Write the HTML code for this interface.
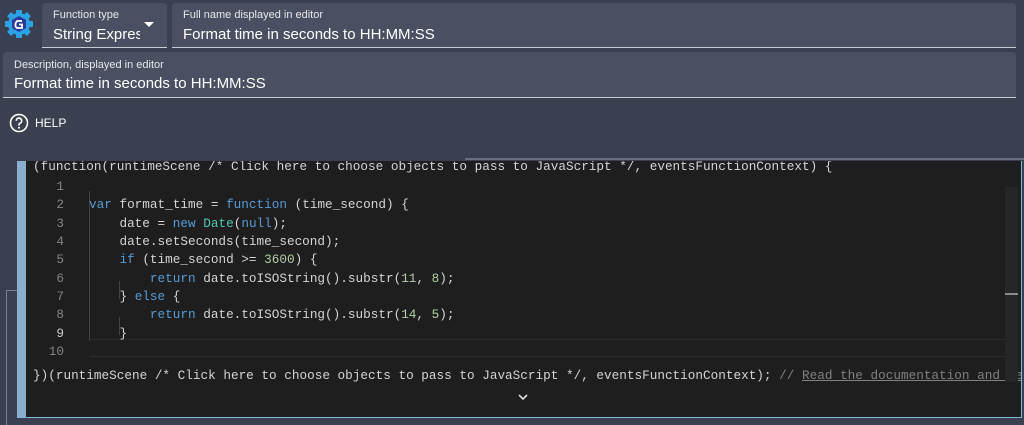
<!DOCTYPE html>
<html><head><meta charset="utf-8"><style>
*{margin:0;padding:0;box-sizing:border-box}
body{width:1024px;height:425px;background:#3a4050;font-family:"Liberation Sans",sans-serif;color:#f2f2f2;position:relative;overflow:hidden}
.f{position:absolute;background:#4a5062;border-radius:4px 4px 0 0;border-bottom:1px solid #c8ccd4}
.lab{position:absolute;font-size:11px;color:#e8e8ea}
.val{position:absolute;font-size:15px;color:#fff;white-space:nowrap}
.code{position:absolute;left:26px;top:161px;width:996px;height:257px;background:#1e1e1e;border-bottom:1px solid #7fb9d9;border-right:1px solid #7fb9d9;overflow:hidden}
.mono{font-family:"Liberation Mono",monospace;font-size:12.7px;white-space:pre;position:absolute;color:#d4d4d4}
.ln{position:absolute;width:38px;text-align:right;color:#858585;font-family:"Liberation Mono",monospace;font-size:12.7px}
.k{color:#569cd6}.t{color:#4ec9b0}.n{color:#b5cea8}
</style></head><body>
<svg style="position:absolute;left:5px;top:10px" width="28" height="28" viewBox="0 0 28 28"><g fill="#2aa2e6"><circle cx="14" cy="14" r="11"/><rect x="11" y="0" width="6" height="28" rx="1"/><rect x="0" y="11" width="28" height="6" rx="1"/><rect x="11" y="0" width="6" height="28" rx="1" transform="rotate(45 14 14)"/><rect x="11" y="0" width="6" height="28" rx="1" transform="rotate(-45 14 14)"/></g><path d="M14 6 L21 10 L21 18 L14 22 L7 18 L7 10Z" fill="#2b3a9a"/><path d="M17 11 L12 11 L10.5 13.5 L10.5 16.5 L12 18 L17 18 L17 14.5 L14 14.5" fill="none" stroke="#fff" stroke-width="1.8"/></svg>
<div class="f" style="left:42px;top:3px;width:125px;height:45px"></div>
<div class="lab" style="left:53px;top:9px">Function type</div>
<div class="val" style="left:53px;top:26px;width:87px;overflow:hidden">String Expression</div>
<div style="position:absolute;left:144px;top:22px;width:0;height:0;border-left:5px solid transparent;border-right:5px solid transparent;border-top:5px solid #fff"></div>
<div class="f" style="left:172px;top:3px;width:844px;height:45px"></div>
<div class="lab" style="left:183px;top:9px">Full name displayed in editor</div>
<div class="val" style="left:183px;top:26px">Format time in seconds to HH:MM:SS</div>
<div class="f" style="left:3px;top:52px;width:1013px;height:46px"></div>
<div class="lab" style="left:14px;top:59px">Description, displayed in editor</div>
<div class="val" style="left:14px;top:75px">Format time in seconds to HH:MM:SS</div>
<svg style="position:absolute;left:9px;top:113px" width="20" height="20" viewBox="0 0 20 20"><circle cx="10" cy="10" r="8.5" fill="none" stroke="#fff" stroke-width="1.6"/><path d="M7.3 7.8a2.7 2.7 0 1 1 3.8 2.4c-.8.4-1.1.9-1.1 1.8v.6" fill="none" stroke="#fff" stroke-width="1.6"/><circle cx="10" cy="14.7" r="1" fill="#fff"/></svg>
<div style="position:absolute;left:35px;top:116px;font-size:12px;color:#fff">HELP</div>
<div style="position:absolute;left:465px;top:158px;width:559px;height:2px;background:#6a7080"></div>
<div style="position:absolute;left:17px;top:161px;width:9px;height:257px;background:#8aaed0"></div>
<div style="position:absolute;left:6px;top:290px;width:1px;height:135px;background:#7a8090"></div>
<div style="position:absolute;left:6px;top:290px;width:11px;height:1px;background:#7a8090"></div>
<div class="code">
<div class="mono" style="left:7px;top:-2px">(function(runtimeScene /* Click here to choose objects to pass to JavaScript */, eventsFunctionContext) {</div>
<div style="position:absolute;left:64px;top:178px;width:918px;height:1px;background:#2c2c2c"></div>
<div style="position:absolute;left:64px;top:195px;width:918px;height:1px;background:#2c2c2c"></div>
<div style="position:absolute;left:63px;top:30px;width:1px;height:150px;background:#444"></div>
<div style="position:absolute;left:93px;top:120px;width:1px;height:18px;background:#444"></div>
<div style="position:absolute;left:93px;top:156px;width:1px;height:18px;background:#444"></div>
<div class="ln" style="left:0;top:18px">1</div>
<div class="ln" style="left:0;top:36px">2</div>
<div class="ln" style="left:0;top:55px">3</div>
<div class="ln" style="left:0;top:73px">4</div>
<div class="ln" style="left:0;top:91px">5</div>
<div class="ln" style="left:0;top:110px">6</div>
<div class="ln" style="left:0;top:128px">7</div>
<div class="ln" style="left:0;top:146px">8</div>
<div class="ln" style="left:0;top:165px;color:#ccc">9</div>
<div class="ln" style="left:0;top:183px">10</div>
<div class="mono" style="left:63px;top:36px"><span class="k">var</span> format_time = <span class="k">function</span> (time_second) {</div>
<div class="mono" style="left:63px;top:55px">    date = <span class="k">new</span> <span class="t">Date</span>(<span class="k">null</span>);</div>
<div class="mono" style="left:63px;top:73px">    date.setSeconds(time_second);</div>
<div class="mono" style="left:63px;top:91px">    <span class="k">if</span> (time_second &gt;= <span class="n">3600</span>) {</div>
<div class="mono" style="left:63px;top:110px">        <span class="k">return</span> date.toISOString().substr(<span class="n">11</span>, <span class="n">8</span>);</div>
<div class="mono" style="left:63px;top:128px">    } <span class="k">else</span> {</div>
<div class="mono" style="left:63px;top:146px">        <span class="k">return</span> date.toISOString().substr(<span class="n">14</span>, <span class="n">5</span>);</div>
<div class="mono" style="left:63px;top:165px">    }</div>
<div class="mono" style="left:7px;top:207px">})(runtimeScene /* Click here to choose objects to pass to JavaScript */, eventsFunctionContext); <span style="color:#808080">// <u>Read the documentation and help</u></span></div>
<div style="position:absolute;left:979px;top:26px;width:13px;height:195px;background:#262626"></div>
<div style="position:absolute;left:979px;top:132px;width:13px;height:2px;background:#8a8a8a"></div>
<svg style="position:absolute;left:491px;top:232px" width="12" height="8" viewBox="0 0 12 8"><path d="M2 2l4 4 4-4" fill="none" stroke="#ddd" stroke-width="1.6"/></svg>
</div>
</body></html>
